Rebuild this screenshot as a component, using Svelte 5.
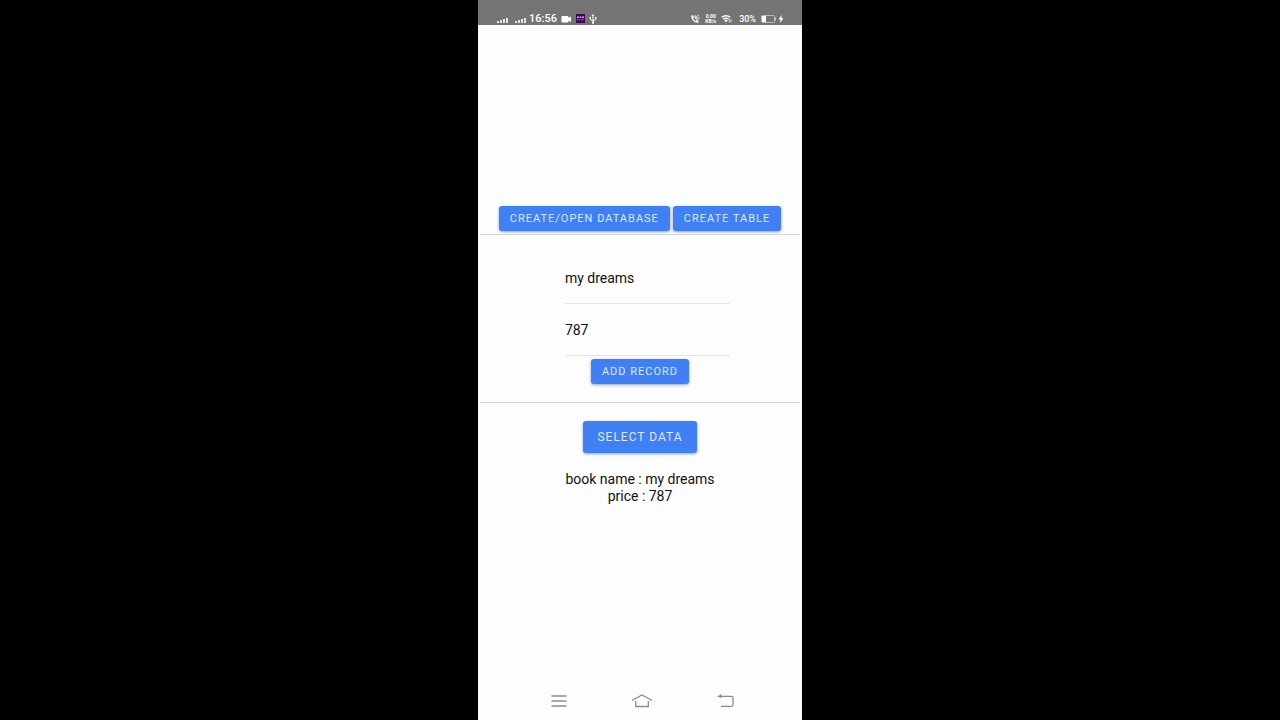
<script>
  let bookName = $state('my dreams');
  let price = $state('787');
  let records = $state([{ name: 'my dreams', price: '787' }]);

  function addRecord() {
    records.push({ name: bookName, price });
  }
</script>

{#snippet signal()}
  <svg class="signal" viewBox="0 0 12 8" width="12" height="8" fill="#e4e4e4" aria-hidden="true">
    <rect x="0" y="5" width="2" height="2" />
    <rect x="3" y="4" width="2" height="3" />
    <rect x="6" y="3" width="2" height="4" />
    <rect x="9" y="2" width="2" height="5" />
  </svg>
{/snippet}

<div class="phone">
  <header class="status">
    <div class="group left">
      {@render signal()}
      {@render signal()}
      <time>16:56</time>
      <svg class="camera" viewBox="0 0 11 8" width="11" height="8" fill="#fff" aria-hidden="true">
        <rect x="0.5" y="1" width="7" height="6.5" rx="1" />
        <path d="M7 3 10 1.500v5.500L7 5.500z" />
      </svg>
      <svg viewBox="0 0 9 9" width="9" height="9" aria-hidden="true">
        <rect width="9" height="9" fill="#3a0758" />
        <path d="M1 3.2h2M3.6 3.2h1.8M6 3.2h2" stroke="#d99be8" stroke-width="1.4" />
        <path d="M1 5.8h3.2M5 5.8h3" stroke="#c63cae" stroke-width="1" />
      </svg>
      <svg class="usb" viewBox="0 0 8 10" width="8" height="10" fill="none" stroke="#fff" aria-hidden="true">
        <path d="M4 1.5v7M1.2 3.5v2L4 7l2.8-1.5v-2" stroke-width="1" />
        <path d="M4 0 5.4 2H2.600z" fill="#fff" stroke="none" />
        <circle cx="4" cy="8.800" r="1.100" fill="#fff" stroke="none" />
        <circle cx="1.200" cy="3.500" r="0.800" fill="#fff" stroke="none" />
        <circle cx="6.800" cy="3.500" r="0.800" fill="#fff" stroke="none" />
      </svg>
    </div>
    <div class="group right">
      <svg viewBox="0 0 10 10" width="10" height="10" fill="none" stroke="#fff" aria-hidden="true">
        <path d="M1.300 1.500C1 5.500 4 8.700 8.300 8.700l.4-1.900-2-.7-1.100.9C4.300 6.300 3.500 5.300 3.100 4.200l.9-1-.7-1.900z" fill="#fff" stroke="none" />
        <path d="M5.200 1.300v2.900h2.300M5.400 4 8.800 1M6.500 5.400c1.500 0 2.600-.7 2.800-2.400" stroke-width="1" />
      </svg>
      <span class="speed"><span>0.00</span><span>KB/s</span></span>
      <svg class="wifi" viewBox="0 0 11 9" width="11" height="9" fill="none" stroke="#fff" aria-hidden="true">
        <path d="M.7 3.200Q5 .2 9.300 3.200M2.300 5.100Q5 3.200 7.700 5.100" stroke-width="1.400" />
        <path d="M3.200 6.200Q5 5 6.800 6.200L5 8.400z" fill="#fff" stroke="none" />
        <path d="M8.300 5.300v3M10 5.300v3" stroke-width=".8" />
      </svg>
      <span class="percent">30%</span>
      <div class="power">
        <svg viewBox="0 0 16 8" width="16" height="8" aria-hidden="true">
          <rect x=".5" y=".5" width="13" height="7" rx="1" fill="none" stroke="#c4c4c4" stroke-width=".9" />
          <rect x="1" y="1" width="4" height="6" fill="#fff" />
          <path d="M14.500 2.500v3" stroke="#c4c4c4" />
        </svg>
        <svg viewBox="0 0 6 8" width="6" height="8" fill="#fff" aria-hidden="true">
          <path d="M3.500 0 .5 4.500h2L2 8l3.500-4.700h-2z" />
        </svg>
      </div>
    </div>
  </header>

  <main>
    <div class="actions">
      <button type="button" class="btn small">Create/Open Database</button>
      <button type="button" class="btn small">Create Table</button>
    </div>
    <hr />
    <form onsubmit={(e) => { e.preventDefault(); addRecord(); }}>
      <div class="fields">
        <input type="text" aria-label="Book name" bind:value={bookName} />
        <input type="text" inputmode="numeric" aria-label="Price" bind:value={price} />
      </div>
      <button type="submit" class="btn small">Add Record</button>
    </form>
    <hr />
    <section>
      <button type="button" class="btn">Select Data</button>
      <div class="records">
        {#each records as record}
          <p>book name : {record.name}<br />price : {record.price}</p>
        {/each}
      </div>
    </section>
  </main>

  <nav aria-label="System">
    <button type="button" aria-label="Recent apps">
      <svg viewBox="0 0 16 16" width="16" height="16"><path d="M.5 3h15M.5 8h15M.5 13h15" /></svg>
    </button>
    <button type="button" aria-label="Home">
      <svg viewBox="0 0 22 16" width="22" height="16"><path d="M1 7.500 11 2l10 5.500M4.700 8v5.500h12.600V8" /></svg>
    </button>
    <button type="button" aria-label="Back">
      <svg viewBox="0 0 20 16" width="20" height="16"><path d="M5.500 1.500 3 3.300h12.500q1.500 0 1.500 1.500v7q0 1.500-1.500 1.500H5M3 3.300l2.500 1" /></svg>
    </button>
  </nav>
</div>

<style>
  :global(body) {
    margin: 0;
    background: #000;
  }

  .phone {
    box-sizing: border-box;
    display: flex;
    flex-direction: column;
    min-height: 100vh;
    aspect-ratio: 9 / 20;
    width: fit-content;
    margin: 0 auto;
    background: #fdfdfd;
    color: #111;
    font: 14px/17px Roboto, sans-serif;
  }

  .status {
    box-sizing: border-box;
    display: flex;
    justify-content: space-between;
    align-items: flex-end;
    height: 25px;
    padding: 0 18px 0 19px;
    background: #747474;
    color: #fff;
  }

  .group {
    display: flex;
    align-items: center;
    gap: 4px;
    height: 13px;
  }

  .right {
    gap: 5px;
  }

  .signal {
    margin-top: 3px;
  }

  .signal + .signal {
    margin-left: 2px;
  }

  time {
    margin-left: -2px;
    font-size: 11px;
    font-weight: 500;
    line-height: 12px;
  }

  .speed {
    display: flex;
    flex-direction: column;
    font-size: 5px;
    font-weight: 700;
    line-height: 5px;
    text-align: center;
  }

  .percent {
    font-size: 9px;
    font-weight: 500;
    line-height: 12px;
  }

  .wifi {
    margin-right: 2px;
  }

  .power {
    display: flex;
    gap: 1px;
  }

  main {
    flex: 1;
    display: flex;
    flex-direction: column;
    justify-content: center;
    padding-top: 4px;
  }

  .actions {
    display: flex;
    justify-content: center;
    gap: 3px;
    margin-bottom: 3px;
  }

  .btn {
    height: 32px;
    padding: 0 14px;
    border: 0;
    border-radius: 3px;
    background: #417ff5;
    box-shadow: 0 1px 3px rgba(30, 70, 150, 0.5);
    color: #dcecff;
    font: 400 12px/16px Roboto, sans-serif;
    letter-spacing: 1px;
    text-transform: uppercase;
    white-space: nowrap;
    cursor: pointer;
  }

  .btn.small {
    height: 25px;
    padding: 0 11px;
    font-size: 11px;
  }

  hr {
    width: calc(100% - 4px);
    height: 1px;
    margin: 0 auto;
    border: 0;
    background: #d6d6d6;
  }

  form {
    display: flex;
    flex-direction: column;
    align-items: center;
    padding: 17px 0 18px;
  }

  .fields {
    display: flex;
    flex-direction: column;
    width: 51%;
    margin-bottom: 3px;
    padding-left: 15px;
  }

  input {
    box-sizing: border-box;
    width: 100%;
    height: 52px;
    padding: 0;
    border: 0;
    border-bottom: 1px solid #e4e4e4;
    border-radius: 0;
    outline: 0;
    background: transparent;
    color: inherit;
    font: inherit;
  }

  section {
    display: flex;
    flex-direction: column;
    align-items: center;
    gap: 18px;
    padding-top: 18px;
  }

  p {
    margin: 0;
    text-align: center;
  }

  nav {
    display: flex;
    justify-content: space-between;
    align-items: center;
    height: 38px;
    padding: 0 66px 0 73px;
  }

  nav button {
    display: flex;
    padding: 0;
    border: 0;
    background: none;
    cursor: pointer;
  }

  nav svg {
    fill: none;
    stroke: #8c8c8c;
    stroke-width: 1.3;
  }
</style>
